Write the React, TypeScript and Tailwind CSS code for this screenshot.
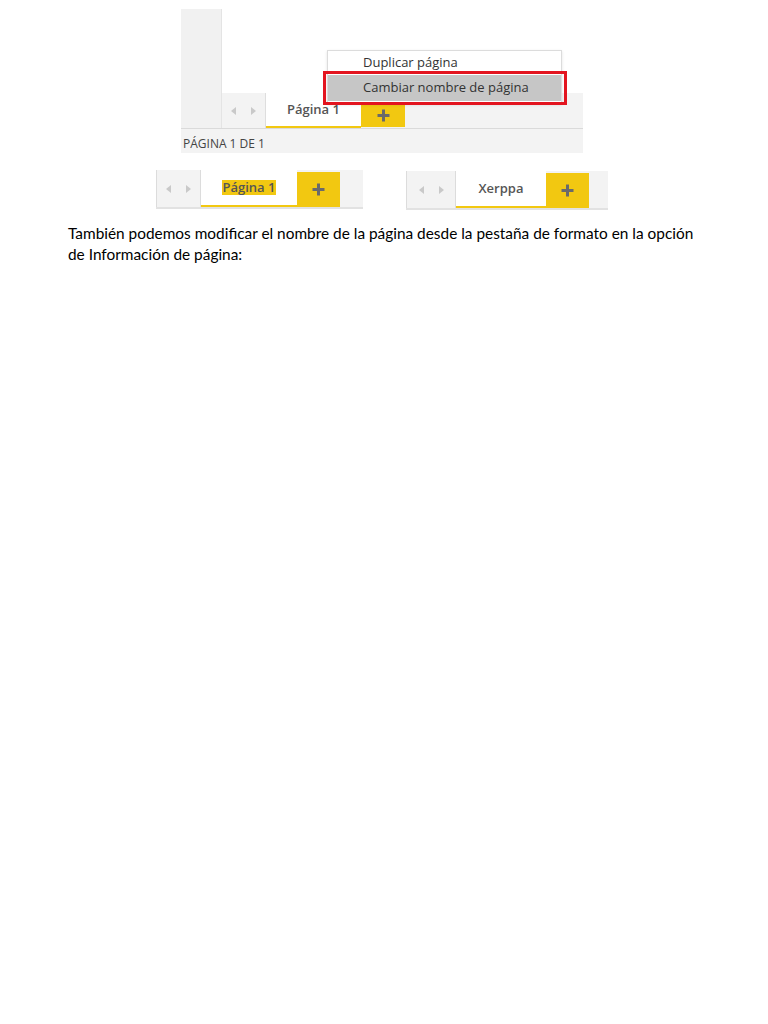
import React from "react";

const AMARILLO = "bg-[#f2c811]";

function Flechas() {
  return (
    <div className="flex h-full items-center justify-center gap-[15px]">
      <svg width="5" height="8" viewBox="0 0 5 8">
        <path d="M5 0 L0 4 L5 8 Z" fill="#c9c9c9" />
      </svg>
      <svg width="5" height="8" viewBox="0 0 5 8">
        <path d="M0 0 L5 4 L0 8 Z" fill="#c9c9c9" />
      </svg>
    </div>
  );
}

function Mas() {
  return (
    <svg width="13" height="13" viewBox="0 0 13 13">
      <path d="M6.5 0.5 V12.5 M0.5 6.5 H12.5" stroke="#6a6a6a" strokeWidth="3" />
    </svg>
  );
}

function CapturaMenu() {
  return (
    <div className="relative w-[402px] bg-white font-['Open_Sans',sans-serif]">
      <div className="flex h-[119px]">
        <div className="w-[41px] border-r border-[#e4e4e4] bg-[#f1f1f1]" />
        <div className="flex flex-1 flex-col">
          <div className="h-[84px] bg-white" />
          <div className="flex h-[35px] bg-[#f3f3f3]">
            <div className="w-[44px] border-r border-[#dedede]">
              <Flechas />
            </div>
            <div className="flex w-[95px] items-center justify-center border-b-2 border-[#f2c811] bg-white text-[13px] font-semibold text-[#555]">
              Página 1
            </div>
            <div className={`mt-[11px] mb-px flex w-[44px] items-center justify-center ${AMARILLO}`}>
              <Mas />
            </div>
          </div>
        </div>
      </div>
      <div className="h-px bg-[#dadada]" />
      <div className="flex h-[24px] items-center bg-[#f3f3f3] pl-[2px] pt-[5px] text-[12px] text-[#444]">
        PÁGINA 1 DE 1
      </div>

      <div className="absolute left-[146px] top-[41px] w-[235px] border border-[#dcdcdc] bg-white pb-[2px] text-[13px] text-[#333] shadow-sm">
        <div className="flex h-[24px] items-center pl-[35px]">Duplicar página</div>
        <div className="flex h-[26px] items-center bg-[#c6c6c6] pl-[35px]">Cambiar nombre de página</div>
      </div>
      <div className="absolute left-[142px] top-[62px] h-[34px] w-[244px] border-[3px] border-[#e3141f]" />
    </div>
  );
}

function CapturaPestana({
  nombre,
  resaltado,
  anchoNav,
  anchoTab,
  anchoResto,
}: {
  nombre: string;
  resaltado?: boolean;
  anchoNav: string;
  anchoTab: string;
  anchoResto: string;
}) {
  return (
    <div className="flex h-[39px] border-b-2 border-[#e2e2e2] bg-[#f3f3f3] font-['Open_Sans',sans-serif]">
      <div className={`${anchoNav} border-l border-r border-[#dcdcdc]`}>
        <Flechas />
      </div>
      <div className={`flex ${anchoTab} items-center justify-center border-b-2 border-[#f2c811] bg-white text-[13px] font-semibold text-[#555]`}>
        {resaltado ? <span className="bg-[#f2c811] px-px leading-[15px]">{nombre}</span> : nombre}
      </div>
      <div className={`mt-[2px] flex w-[43px] items-center justify-center ${AMARILLO}`}>
        <Mas />
      </div>
      <div className={anchoResto} />
    </div>
  );
}

export default function App() {
  return (
    <div className="min-h-screen w-[768px] bg-white">
      <div className="pl-[181px] pt-[9px]">
        <CapturaMenu />
      </div>
      <div className="mt-[17px] flex">
        <div className="ml-[156px]">
          <CapturaPestana nombre="Página 1" resaltado anchoNav="w-[45px]" anchoTab="w-[96px]" anchoResto="w-[23px]" />
        </div>
        <div className="ml-[43px] mt-px">
          <CapturaPestana nombre="Xerppa" anchoNav="w-[50px]" anchoTab="w-[90px]" anchoResto="w-[19px]" />
        </div>
      </div>
      <p className="mt-[13px] w-[700px] pl-[68px] font-['Lato',sans-serif] text-[15.4px] leading-[21px] text-black">
        También podemos modificar el nombre de la página desde la pestaña de formato en la opción de Información de página:
      </p>
    </div>
  );
}
